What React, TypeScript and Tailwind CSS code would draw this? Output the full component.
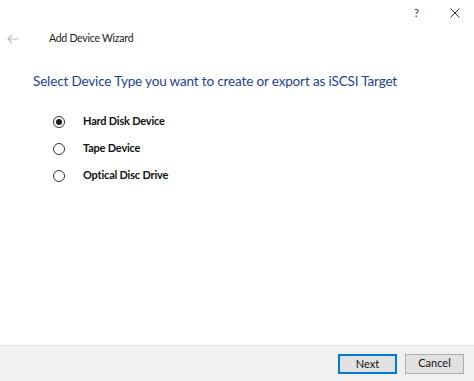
import React, { useState } from "react";

const options = ["Hard Disk Device", "Tape Device", "Optical Disc Drive"];

function Radio({ checked }: { checked: boolean }) {
  return (
    <span className="flex h-[12px] w-[12px] items-center justify-center rounded-full border border-[#333333] bg-white">
      {checked && <span className="h-[6px] w-[6px] rounded-full bg-[#1a1a1a]" />}
    </span>
  );
}

export default function App() {
  const [selected, setSelected] = useState(0);

  return (
    <div
      className="flex h-[381px] w-[474px] flex-col bg-white text-[#000000]"
      style={{ fontFamily: 'Lato, "Noto Sans", sans-serif' }}
    >
      {/* title bar */}
      <div className="flex h-[26px] items-center justify-end">
        <span className="mr-[31px] text-[11px] text-[#333333]">?</span>
        <svg className="mr-[14px]" width="10" height="10" viewBox="0 0 10 10">
          <path d="M0.5 0.5 L9.5 9.5 M9.5 0.5 L0.5 9.5" stroke="#333333" strokeWidth="1" />
        </svg>
      </div>

      {/* header */}
      <div className="flex h-[25px] items-center">
        <svg className="ml-[7px]" width="12" height="10" viewBox="0 0 12 10">
          <path d="M5 0.8 L1 5 L5 9.2 M1 5 H11.5" stroke="#b8b8b8" strokeWidth="1.2" fill="none" />
        </svg>
        <span className="ml-[30px] text-[10.5px] tracking-[-0.25px] text-[#1a1a1a]">
          Add Device Wizard
        </span>
      </div>

      <div className="mt-[19px] pl-[33px] text-[13.5px] leading-[22px] tracking-[-0.15px] text-[#1e3f91]">
        Select Device Type you want to create or export as iSCSI Target
      </div>

      <div className="mt-[21px] flex flex-col gap-[10px] pl-[53px]">
        {options.map((o, i) => (
          <label
            key={o}
            className="flex h-[17px] cursor-default items-center"
            onClick={() => setSelected(i)}
          >
            <Radio checked={selected === i} />
            <span className="ml-[18px] text-[11px] font-bold tracking-[-0.2px] text-[#111111]">{o}</span>
          </label>
        ))}
      </div>

      <div className="flex-1" />

      {/* footer */}
      <div className="flex h-[36px] items-center justify-end gap-[8px] border-t border-[#e3e3e3] bg-[#f0f0f0] pr-[10px]">
        <button className="h-[20px] w-[59px] border-2 border-[#0078d7] bg-[#e1e1e1] text-[11px] text-[#111111]">
          Next
        </button>
        <button className="h-[20px] w-[59px] border border-[#adadad] bg-[#e1e1e1] text-[11px] text-[#111111]">
          Cancel
        </button>
      </div>
    </div>
  );
}
